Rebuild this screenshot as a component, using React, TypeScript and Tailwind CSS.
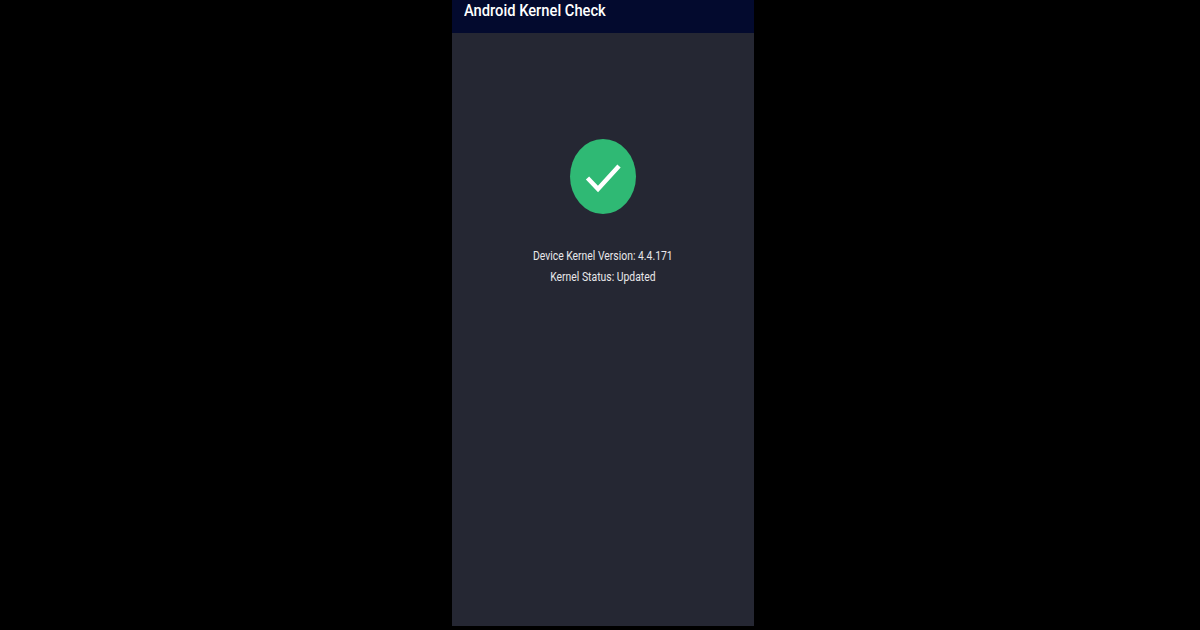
export default function App() {
  return (
    <div className="w-[1200px] h-[630px] bg-black flex justify-center font-['Roboto',sans-serif] overflow-hidden">
      <div className="w-[302px] h-[626px] ml-[5px] bg-[#252733] flex flex-col">
        {/* App bar */}
        <div className="h-[33px] bg-[#030a2e] pl-3 shrink-0">
          <h1 className="text-[17px] leading-[21px] font-medium text-white origin-left scale-x-[0.865]">Android Kernel Check</h1>
        </div>

        {/* Status */}
        <div className="flex flex-col items-center pt-[106px]">
          <div className="w-[66px] h-[75px] rounded-[50%] bg-[#2fb974] flex items-center justify-center">
            <svg width="66" height="75" viewBox="0 0 66 75" fill="none" stroke="#ffffff" strokeWidth={4.5}>
              <path d="M17.5 39L28 50L49 27" />
            </svg>
          </div>
          <p className="mt-[32px] text-xs leading-[20px] text-[#e8e8ea] scale-x-[0.865]">Device Kernel Version: 4.4.171</p>
          <p className="mt-[1px] text-xs leading-[20px] text-[#e8e8ea] scale-x-[0.865]">Kernel Status: Updated</p>
        </div>
      </div>
    </div>
  );
}
